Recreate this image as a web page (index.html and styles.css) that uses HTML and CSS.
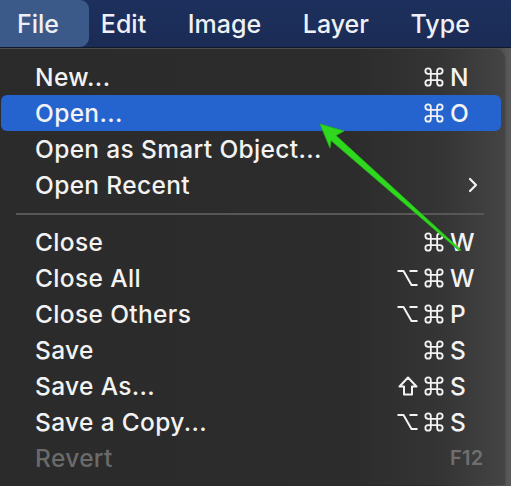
FILE: index.html
```html
<!DOCTYPE html>
<html>
<head>
<meta charset="utf-8">
<link rel="stylesheet" href="styles.css">
</head>
<body>
<div class="screen">
  <div class="menubar">
    <div class="title active">File</div>
    <div class="title">Edit</div>
    <div class="title">Image</div>
    <div class="title">Layer</div>
    <div class="title">Type</div>
  </div>
  <div class="menu">
    <div class="row"><span class="label">New...</span><span class="keys"><span class="mods"><svg class="sym" width="22" height="20" viewBox="-1 -1 24 22"><path d="M4.5 6.5H17.5A3 3 0 1 0 14.5 3.5V16.5A3 3 0 1 0 17.5 13.5H4.5A3 3 0 1 0 7.5 16.5V3.5A3 3 0 1 0 4.5 6.5Z"/></svg></span><span class="key">N</span></span></div>
    <div class="row selected"><span class="label">Open...</span><span class="keys"><span class="mods"><svg class="sym" width="22" height="20" viewBox="-1 -1 24 22"><path d="M4.5 6.5H17.5A3 3 0 1 0 14.5 3.5V16.5A3 3 0 1 0 17.5 13.5H4.5A3 3 0 1 0 7.5 16.5V3.5A3 3 0 1 0 4.5 6.5Z"/></svg></span><span class="key">O</span></span></div>
    <div class="row"><span class="label">Open as Smart Object...</span></div>
    <div class="row"><span class="label">Open Recent</span><svg class="chev" width="10" height="16" viewBox="0 0 10 16"><polyline points="2,2 8,8 2,14" fill="none" stroke="#f2f2f2" stroke-width="2.2" stroke-linecap="round" stroke-linejoin="round"/></svg></div>
    <div class="sep"></div>
    <div class="row"><span class="label">Close</span><span class="keys"><span class="mods"><svg class="sym" width="22" height="20" viewBox="-1 -1 24 22"><path d="M4.5 6.5H17.5A3 3 0 1 0 14.5 3.5V16.5A3 3 0 1 0 17.5 13.5H4.5A3 3 0 1 0 7.5 16.5V3.5A3 3 0 1 0 4.5 6.5Z"/></svg></span><span class="key">W</span></span></div>
    <div class="row"><span class="label">Close All</span><span class="keys"><span class="mods"><svg class="sym" width="21" height="18" viewBox="0 0 21 18"><path d="M0.5 2H6.5L14.5 16H20.5M12.5 2H20.5"/></svg><svg class="sym" width="22" height="20" viewBox="-1 -1 24 22"><path d="M4.5 6.5H17.5A3 3 0 1 0 14.5 3.5V16.5A3 3 0 1 0 17.5 13.5H4.5A3 3 0 1 0 7.5 16.5V3.5A3 3 0 1 0 4.5 6.5Z"/></svg></span><span class="key">W</span></span></div>
    <div class="row"><span class="label">Close Others</span><span class="keys"><span class="mods"><svg class="sym" width="21" height="18" viewBox="0 0 21 18"><path d="M0.5 2H6.5L14.5 16H20.5M12.5 2H20.5"/></svg><svg class="sym" width="22" height="20" viewBox="-1 -1 24 22"><path d="M4.5 6.5H17.5A3 3 0 1 0 14.5 3.5V16.5A3 3 0 1 0 17.5 13.5H4.5A3 3 0 1 0 7.5 16.5V3.5A3 3 0 1 0 4.5 6.5Z"/></svg></span><span class="key">P</span></span></div>
    <div class="row"><span class="label">Save</span><span class="keys"><span class="mods"><svg class="sym" width="22" height="20" viewBox="-1 -1 24 22"><path d="M4.5 6.5H17.5A3 3 0 1 0 14.5 3.5V16.5A3 3 0 1 0 17.5 13.5H4.5A3 3 0 1 0 7.5 16.5V3.5A3 3 0 1 0 4.5 6.5Z"/></svg></span><span class="key">S</span></span></div>
    <div class="row"><span class="label">Save As...</span><span class="keys"><span class="mods"><svg class="sym" width="20" height="20" viewBox="0 0 20 20"><path d="M10 1.5L18.5 10.5H14V18.5H6V10.5H1.5Z"/></svg><svg class="sym" width="22" height="20" viewBox="-1 -1 24 22"><path d="M4.5 6.5H17.5A3 3 0 1 0 14.5 3.5V16.5A3 3 0 1 0 17.5 13.5H4.5A3 3 0 1 0 7.5 16.5V3.5A3 3 0 1 0 4.5 6.5Z"/></svg></span><span class="key">S</span></span></div>
    <div class="row"><span class="label">Save a Copy...</span><span class="keys"><span class="mods"><svg class="sym" width="21" height="18" viewBox="0 0 21 18"><path d="M0.5 2H6.5L14.5 16H20.5M12.5 2H20.5"/></svg><svg class="sym" width="22" height="20" viewBox="-1 -1 24 22"><path d="M4.5 6.5H17.5A3 3 0 1 0 14.5 3.5V16.5A3 3 0 1 0 17.5 13.5H4.5A3 3 0 1 0 7.5 16.5V3.5A3 3 0 1 0 4.5 6.5Z"/></svg></span><span class="key">S</span></span></div>
    <div class="row disabled"><span class="label">Revert</span><span class="keys"><span class="fkey">F12</span></span></div>
  </div>
  <svg class="arrow" width="511" height="486" viewBox="0 0 511 486">
    <polygon points="320,124 344,131 336,135.5 461,250 459,250.5 331,140.5 330,148" fill="#2fd81f" stroke="#22b814" stroke-width="0.8" stroke-linejoin="round"/>
  </svg>
</div>
</body>
</html>
```

FILE: styles.css
```css
* { box-sizing: border-box; }
html, body { margin: 0; padding: 0; }
body {
  width: 511px;
  height: 486px;
  overflow: hidden;
  background: #2a2a2a;
  font-family: "Inter", "Liberation Sans", sans-serif;
  -webkit-font-smoothing: antialiased;
}
.screen {
  position: relative;
  width: 511px;
  height: 486px;
  background: linear-gradient(to right, #2b2b2b 0%, #2b2b2b 85%, #4a4a4a 97%, #5b5b5b 100%);
}
.menubar {
  height: 48px;
  background: linear-gradient(to bottom, #1d305d, #1a2b55);
  display: flex;
  align-items: stretch;
  border-bottom: 1px solid #111827;
}
.title {
  display: flex;
  align-items: center;
  color: #eef0f5;
  font-size: 25px;
  font-weight: 500;
  padding: 0 20.8px;
}
.title.active {
  background: #3b5a8a;
  border-radius: 0 9px 9px 0;
  padding-left: 17px;
  padding-right: 30px;
  margin-right: -9px;
}
.menu {
  width: 506px;
  height: 437px;
  background: linear-gradient(to right, #2b2b2b 0%, #2c2c2c 70%, #353535 88%, #444 100%);
  border-top: 1px solid #4d4d4d;
  border-right: 1px solid #505050;
  border-radius: 0 11px 0 0;
  padding-top: 10px;
}
.row {
  height: 36px;
  display: flex;
  align-items: center;
  justify-content: space-between;
  margin: 0 4px 0 1px;
  padding: 0 26px 0 34px;
  color: #f3f3f3;
  font-size: 24.5px;
  font-weight: 500;
  letter-spacing: 0.35px;
  border-radius: 6px;
}
.row.selected {
  background: #2563cf;
}
.row.disabled { color: #6a6a6a; }
.keys {
  display: flex;
  align-items: center;
}
.mods {
  display: flex;
  align-items: center;
  justify-content: flex-end;
  gap: 5px;
}
.sym {
  display: block;
  fill: none;
  stroke: #f3f3f3;
  stroke-width: 2;
  stroke-linejoin: round;
}
.key {
  width: 30px;
  padding-left: 5px;
  text-align: left;
  letter-spacing: 0;
}
.fkey {
  width: 32px;
  margin-right: -7px;
  font-size: 20px;
  font-weight: 600;
  letter-spacing: 0.3px;
  color: #6f6f6f;
}
.chev { margin-right: -3px; }
.sep {
  height: 2px;
  background: #575757;
  margin: 10px 21px 9px 16px;
}
.arrow {
  position: absolute;
  left: 0;
  top: 0;
  pointer-events: none;
}
```
